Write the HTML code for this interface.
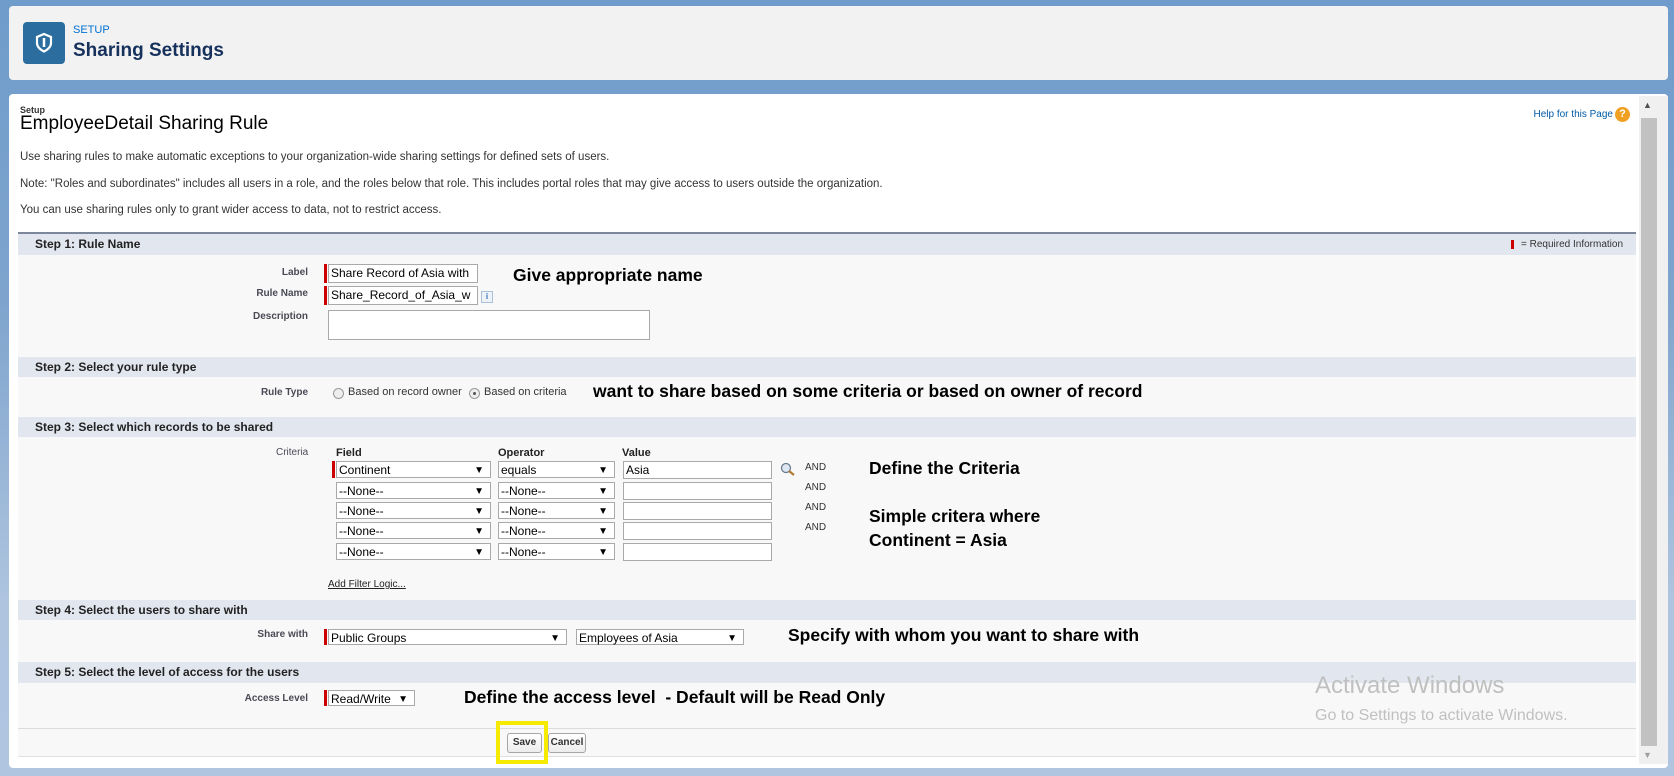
<!DOCTYPE html>
<html><head><meta charset="utf-8">
<style>
*{margin:0;padding:0;box-sizing:border-box}
body{width:1674px;height:776px;overflow:hidden;position:relative;font-family:"Liberation Sans",Arial,sans-serif;background:linear-gradient(#6f9ccb 0,#7ea4cd 300px,#aec4df 600px,#b0c5e0 776px)}
.a{position:absolute;white-space:nowrap}
.card{position:absolute;background:#fff;border-radius:4px}
.hdr{position:absolute;left:18px;width:1618px;height:21px;background:#e2e6ef;font-size:12px;font-weight:bold;color:#222;padding:3px 0 0 17px}
.bd{position:absolute;left:18px;width:1618px;background:#f8f8f8}
.lbl{position:absolute;font-size:10px;font-weight:bold;color:#4a4a56;text-align:right;width:120px}
.inp{position:absolute;background:#fff;border:1px solid #a9a9a9;font-size:12px;color:#000;padding:1px 2px;height:17px;line-height:14px;overflow:hidden;white-space:nowrap}
.req{position:absolute;width:3px;background:#c00}
.sel{position:absolute;background:#fff;border:1px solid #a9a9a9;font-size:12px;height:17px;line-height:14px;padding:1px 2px;white-space:nowrap}
.sel:after{content:"▼";position:absolute;right:6px;top:2px;font-size:10px}
.ann{position:absolute;font-size:17.5px;font-weight:bold;color:#000;white-space:nowrap}
.and{position:absolute;font-size:10px;color:#333}
</style></head><body>
<div class="card" style="left:9px;top:6px;width:1659px;height:74px;background:#f2f2f2;border-radius:4px"></div>
<div class="a" style="left:23px;top:22px;width:42px;height:42px;background:#2a6d9e;border-radius:4px"></div>
<svg class="a" style="left:34px;top:32px" width="20" height="22" viewBox="0 0 20 22"><path d="M10 2 L17 5 V11 C17 15 13 18 10 19.5 C7 18 3 15 3 11 V5 Z" fill="none" stroke="#fff" stroke-width="2.2"/><path d="M10 6 V15" stroke="#fff" stroke-width="2.5"/></svg>
<div class="a" style="left:73px;top:24px;font-size:11px;color:#0070d2">SETUP</div>
<div class="a" style="left:73px;top:40px;font-size:19px;font-weight:bold;color:#16325c">Sharing Settings</div>
<div class="card" style="left:9px;top:94px;width:1659px;height:674px"></div>
<div class="a" style="left:1658px;top:96px;width:10px;height:668px;background:#f0f0f0"></div>
<div class="a" style="left:1639px;top:96px;width:19px;height:668px;background:#f0f0f0"></div>
<div class="a" style="left:1641px;top:118px;width:16px;height:628px;background:#c1c1c1"></div>
<div class="a" style="left:1643px;top:100px;font-size:9px;color:#505050">▲</div>
<div class="a" style="left:1643px;top:750px;font-size:9px;color:#a0a0a0">▼</div>
<div class="a" style="left:20px;top:105px;font-size:9px;font-weight:bold;color:#333">Setup</div>
<div class="a" style="left:20px;top:113px;font-size:19px;color:#000">EmployeeDetail Sharing Rule</div>
<div class="a" style="left:20px;top:151px;font-size:11.5px;color:#333">Use sharing rules to make automatic exceptions to your organization-wide sharing settings for defined sets of users.</div>
<div class="a" style="left:20px;top:178px;font-size:11.5px;color:#333">Note: "Roles and subordinates" includes all users in a role, and the roles below that role. This includes portal roles that may give access to users outside the organization.</div>
<div class="a" style="left:20px;top:204px;font-size:11.5px;color:#333">You can use sharing rules only to grant wider access to data, not to restrict access.</div>
<div class="a" style="right:61px;top:109px;font-size:10px;color:#015ba7">Help for this Page</div>
<div class="a" style="left:1615px;top:107px;width:15px;height:15px;border-radius:50%;background:#f0a020;color:#fff;font-size:11px;font-weight:bold;text-align:center;line-height:15px">?</div>
<div class="a" style="left:18px;top:232px;width:1618px;height:2px;background:#7c879c"></div>
<div class="hdr" style="top:234px">Step 1: Rule Name</div>
<div class="req" style="left:1511px;top:240px;height:9px"></div>
<div class="a" style="left:1521px;top:239px;font-size:10px;color:#333">= Required Information</div>
<div class="bd" style="top:255px;height:102px"></div>
<div class="lbl" style="left:188px;top:267px">Label</div>
<div class="req" style="left:324px;top:264px;height:19px"></div>
<div class="inp" style="left:328px;top:264px;width:150px;height:19px">Share Record of Asia with</div>
<div class="lbl" style="left:188px;top:288px">Rule Name</div>
<div class="req" style="left:324px;top:286px;height:19px"></div>
<div class="inp" style="left:328px;top:286px;width:150px;height:19px">Share_Record_of_Asia_w</div>
<div class="a" style="left:481px;top:291px;width:12px;height:12px;border:1px solid #a8c0dc;background:#eef3fa;font-size:8px;color:#2a6ab8;text-align:center;line-height:10px;font-weight:bold">i</div>
<div class="lbl" style="left:188px;top:311px">Description</div>
<div class="inp" style="left:328px;top:310px;width:322px;height:30px"></div>
<div class="ann" style="left:513px;top:265px">Give appropriate name</div>
<div class="hdr" style="top:357px;height:20px">Step 2: Select your rule type</div>
<div class="bd" style="top:377px;height:40px"></div>
<div class="lbl" style="left:188px;top:387px">Rule Type</div>
<div class="a" style="left:333px;top:388px;width:11px;height:11px;border-radius:50%;border:1px solid #999;background:#eee"></div>
<div class="a" style="left:348px;top:386px;font-size:11px;color:#333">Based on record owner</div>
<div class="a" style="left:469px;top:388px;width:11px;height:11px;border-radius:50%;border:1px solid #999;background:#eee"></div>
<div class="a" style="left:473px;top:392px;width:3px;height:3px;border-radius:50%;background:#555"></div>
<div class="a" style="left:484px;top:386px;font-size:11px;color:#333">Based on criteria</div>
<div class="ann" style="left:593px;top:381px">want to share based on some criteria or based on owner of record</div>
<div class="hdr" style="top:417px;height:20px">Step 3: Select which records to be shared</div>
<div class="bd" style="top:437px;height:163px"></div>
<div class="a" style="left:276px;top:447px;font-size:10px;color:#4a4a56">Criteria</div>
<div class="a" style="left:336px;top:447px;font-size:11px;font-weight:bold;color:#222">Field</div>
<div class="a" style="left:498px;top:447px;font-size:11px;font-weight:bold;color:#222">Operator</div>
<div class="a" style="left:622px;top:447px;font-size:11px;font-weight:bold;color:#222">Value</div>
<div class="req" style="left:332px;top:461px;height:17px"></div>
<div class="sel" style="left:336px;top:461px;width:155px">Continent</div>
<div class="sel" style="left:498px;top:461px;width:117px">equals</div>
<div class="inp" style="left:623px;top:461px;width:149px;height:18px">Asia</div>
<div class="sel" style="left:336px;top:482px;width:155px">--None--</div>
<div class="sel" style="left:498px;top:482px;width:117px">--None--</div>
<div class="inp" style="left:623px;top:482px;width:149px;height:18px"></div>
<div class="sel" style="left:336px;top:502px;width:155px">--None--</div>
<div class="sel" style="left:498px;top:502px;width:117px">--None--</div>
<div class="inp" style="left:623px;top:502px;width:149px;height:18px"></div>
<div class="sel" style="left:336px;top:522px;width:155px">--None--</div>
<div class="sel" style="left:498px;top:522px;width:117px">--None--</div>
<div class="inp" style="left:623px;top:522px;width:149px;height:18px"></div>
<div class="sel" style="left:336px;top:543px;width:155px">--None--</div>
<div class="sel" style="left:498px;top:543px;width:117px">--None--</div>
<div class="inp" style="left:623px;top:543px;width:149px;height:18px"></div>
<svg class="a" style="left:780px;top:462px" width="16" height="14" viewBox="0 0 16 14"><circle cx="6" cy="6" r="4.5" fill="#dfe8f2" stroke="#6a7c90" stroke-width="1.3"/><path d="M9 9 L14 13" stroke="#b07a30" stroke-width="2.2"/></svg>
<div class="and" style="left:805px;top:462px">AND</div>
<div class="and" style="left:805px;top:482px">AND</div>
<div class="and" style="left:805px;top:502px">AND</div>
<div class="and" style="left:805px;top:522px">AND</div>
<div class="a" style="left:328px;top:579px;font-size:10px;color:#222;text-decoration:underline">Add Filter Logic...</div>
<div class="ann" style="left:869px;top:458px">Define the Criteria</div>
<div class="ann" style="left:869px;top:506px">Simple critera where</div>
<div class="ann" style="left:869px;top:530px">Continent = Asia</div>
<div class="hdr" style="top:600px;height:20px">Step 4: Select the users to share with</div>
<div class="bd" style="top:620px;height:42px"></div>
<div class="lbl" style="left:188px;top:629px">Share with</div>
<div class="req" style="left:324px;top:629px;height:16px"></div>
<div class="sel" style="left:328px;top:629px;width:239px;height:16px">Public Groups</div>
<div class="sel" style="left:576px;top:629px;width:168px;height:16px">Employees of Asia</div>
<div class="ann" style="left:788px;top:625px">Specify with whom you want to share with</div>
<div class="hdr" style="top:662px;height:21px">Step 5: Select the level of access for the users</div>
<div class="bd" style="top:683px;height:45px"></div>
<div class="lbl" style="left:188px;top:693px">Access Level</div>
<div class="req" style="left:324px;top:690px;height:16px"></div>
<div class="sel" style="left:328px;top:690px;width:87px;height:16px">Read/Write</div>
<div class="ann" style="left:464px;top:687px">Define the access level&nbsp; - Default will be Read Only</div>
<div class="bd" style="top:728px;height:29px;border-top:1px solid #dcdcdc;border-bottom:1px solid #e0e0e0"></div>
<div class="a" style="left:507px;top:733px;width:35px;height:20px;border:1px solid #a5a5a5;border-radius:3px;background:linear-gradient(#fff,#ededed);font-size:10px;font-weight:bold;color:#333;text-align:center;line-height:18px">Save</div>
<div class="a" style="left:548px;top:733px;width:38px;height:20px;border:1px solid #a5a5a5;border-radius:3px;background:linear-gradient(#fff,#ededed);font-size:10px;font-weight:bold;color:#333;text-align:center;line-height:18px">Cancel</div>
<div class="a" style="left:496px;top:721px;width:52px;height:43px;border:4px solid #f5ea00"></div>
<div class="a" style="left:1315px;top:672px;font-size:24px;color:#c0c0c0">Activate Windows</div>
<div class="a" style="left:1315px;top:707px;font-size:16px;color:#c0c0c0">Go to Settings to activate Windows.</div>
</body></html>
